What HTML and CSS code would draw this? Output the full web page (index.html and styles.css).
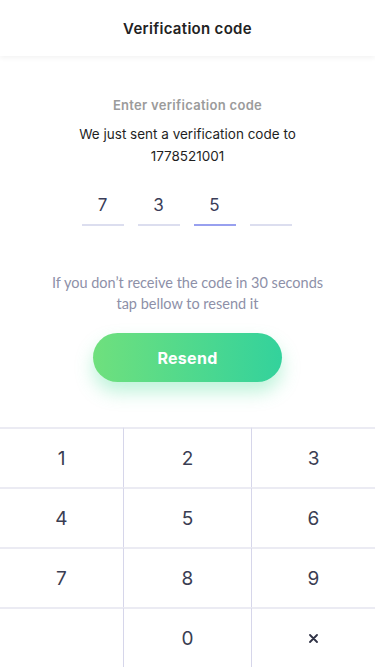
FILE: index.html
```html
<!DOCTYPE html>
<html lang="en">
<head>
<meta charset="utf-8">
<meta name="viewport" content="width=device-width, initial-scale=1">
<title>Verification code</title>
<link rel="stylesheet" href="styles.css">
</head>
<body>
<div class="page">
  <header class="header">Verification code</header>
  <main class="content">
    <p class="subtitle">Enter verification code</p>
    <p class="sent">We just sent a verification code to<br>1778521001</p>
    <div class="code">
      <div class="digit">7</div>
      <div class="digit">3</div>
      <div class="digit active">5</div>
      <div class="digit"></div>
    </div>
    <p class="hint">If you don’t receive the code in 30 seconds<br>tap bellow to resend it</p>
    <button class="resend">Resend</button>
  </main>
  <section class="keypad">
    <div class="key">1</div>
    <div class="key">2</div>
    <div class="key">3</div>
    <div class="key">4</div>
    <div class="key">5</div>
    <div class="key">6</div>
    <div class="key">7</div>
    <div class="key">8</div>
    <div class="key">9</div>
    <div class="key"></div>
    <div class="key">0</div>
    <div class="key"><svg class="del" width="9" height="9" viewBox="0 0 9 9"><path d="M1 1L8 8M8 1L1 8" stroke="#2f3245" stroke-width="1.8" stroke-linecap="round"/></svg></div>
  </section>
</div>
</body>
</html>
```
FILE: styles.css
```css
* { box-sizing: border-box; }
html, body { margin: 0; padding: 0; background: #fff; }
body { font-family: Inter, "Noto Sans", sans-serif; }
.page {
  width: 375px;
  height: 667px;
  display: flex;
  flex-direction: column;
  overflow: hidden;
}
.header {
  height: 56px;
  flex: none;
  display: flex;
  align-items: center;
  justify-content: center;
  font-size: 15px;
  font-weight: 600;
  color: #222;
  letter-spacing: 0.3px;
  box-shadow: 0 2px 5px rgba(0,0,0,0.05);
  position: relative;
  z-index: 1;
}
.content {
  display: flex;
  flex-direction: column;
  align-items: center;
  padding-top: 40px;
}
.subtitle {
  margin: 0;
  font-size: 13px;
  line-height: 18px;
  font-weight: 600;
  color: #9b9b9b;
  letter-spacing: 0.3px;
}
.sent {
  margin: 9px 0 0;
  font-size: 13.5px;
  line-height: 22px;
  color: #1f1f1f;
  text-align: center;
}
.code {
  margin-top: 26px;
  display: flex;
  gap: 14px;
  margin-left: -2px;
}
.digit {
  width: 42px;
  height: 33px;
  padding-bottom: 7px;
  border-bottom: 2px solid #dcdeef;
  text-align: center;
  font-size: 17px;
  line-height: 24px;
  color: #3a3d58;
}
.digit.active { border-bottom-color: #98a0ef; }
.hint {
  margin: 46px 0 0;
  font-family: Lato, "Noto Sans", sans-serif;
  font-size: 14.5px;
  line-height: 21px;
  color: #8d90a8;
  text-align: center;
}
.resend {
  margin-top: 19px;
  width: 189px;
  height: 49px;
  border: 0;
  border-radius: 25px;
  background: linear-gradient(90deg, #6fe07d 0%, #33d29c 100%);
  box-shadow: 0 10px 18px rgba(70, 220, 150, 0.35);
  color: #fff;
  font-family: Inter, "Noto Sans", sans-serif;
  font-size: 16px;
  font-weight: 700;
  letter-spacing: 0.3px;
}
.keypad {
  margin-top: auto;
  display: grid;
  grid-template-columns: 123px 1fr 123px;
  grid-auto-rows: 60px;
}
.key {
  display: flex;
  align-items: center;
  justify-content: center;
  border-top: 2px solid #ebebf3;
  font-size: 19px;
  color: #3a3d52;
}
.key:nth-child(3n+2) {
  border-left: 1px solid #d6d6ea;
  border-right: 1px solid #d6d6ea;
}
.del { display: block; }
```
